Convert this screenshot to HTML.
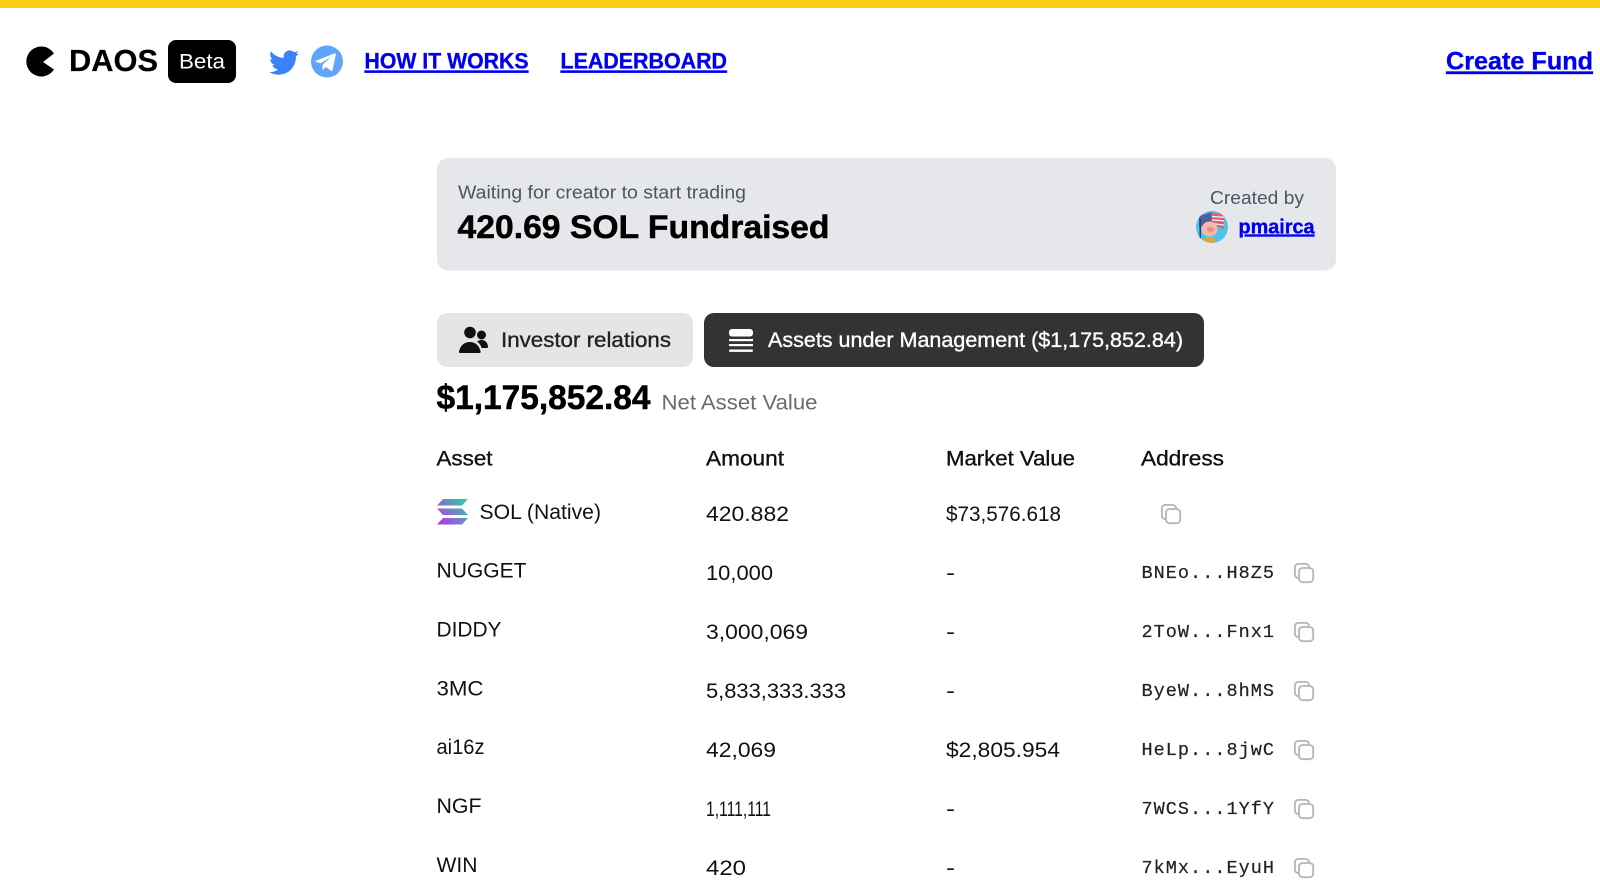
<!DOCTYPE html>
<html lang="en">
<head>
<meta charset="utf-8">
<title>DAOS</title>
<style>
html,body{margin:0;padding:0;background:#fff;width:1600px;height:891px;overflow:hidden}
svg{display:block;position:absolute;left:0;top:0}
text{font-family:"Liberation Sans",sans-serif;white-space:pre}
.m{stroke:currentColor;stroke-width:.35px}
.b{font-weight:700;stroke:currentColor;stroke-width:.5px}
.lnk{fill:#0000f0;font-weight:700;text-decoration:underline;stroke:#0000f0;stroke-width:.35px}
.t{font-size:21px;fill:#111}
.mono{font-family:"Liberation Mono",monospace;font-size:18.5px;fill:#222;stroke:#222;stroke-width:.2px}
</style>
</head>
<body>
<svg width="1600" height="891" viewBox="0 0 1600 891" xmlns="http://www.w3.org/2000/svg">
<defs>
<linearGradient id="sol" x1="437" y1="526" x2="468" y2="498" gradientUnits="userSpaceOnUse">
<stop offset="0" stop-color="#c026f0"/><stop offset=".5" stop-color="#7a80c8"/><stop offset="1" stop-color="#14e0a0"/>
</linearGradient>
<g id="copy" fill="none" stroke="#b5b5b5" stroke-width="1.8">
<rect x="0.9" y="0.9" width="14.2" height="14.2" rx="3.5"/>
<rect x="5" y="5" width="14.2" height="14.2" rx="3.5" fill="#fff"/>
</g>
</defs>

<rect x="0" y="0" width="1600" height="8" fill="#fdce14"/>

<!-- logo -->
<path d="M54 53.500A15 15 0 1 0 54 69.500L43 62Z" fill="#000"/>
<text x="69" y="71" font-size="31" textLength="89" lengthAdjust="spacingAndGlyphs" fill="#000" color="#000" class="b" style="stroke-width:.2px">DAOS</text>
<rect x="168" y="40" width="68" height="43" rx="8" fill="#000"/>
<text x="179" y="68.500" font-size="21" textLength="46" lengthAdjust="spacingAndGlyphs" fill="#fff">Beta</text>

<!-- twitter -->
<path transform="translate(269,47.500) scale(1.25)" d="M23.95 4.57a10 10 0 0 1-2.83.8 4.96 4.96 0 0 0 2.17-2.72c-.95.56-2 .96-3.130 1.190a4.920 4.920 0 0 0-8.380 4.480C7.690 8.100 4.070 6.130 1.640 3.160a4.820 4.820 0 0 0-.67 2.480c0 1.710.87 3.210 2.190 4.100a4.900 4.900 0 0 1-2.230-.62v.06a4.920 4.920 0 0 0 3.950 4.830 5 5 0 0 1-2.210.08 4.940 4.940 0 0 0 4.600 3.420A9.870 9.870 0 0 1 0 19.540a14 14 0 0 0 7.560 2.210c9.050 0 14-7.500 14-13.980 0-.21 0-.42-.02-.63a9.940 9.940 0 0 0 2.410-2.570z" fill="#3b82f6"/>
<!-- telegram -->
<circle cx="327" cy="61.500" r="16" fill="#60a5fa"/>
<path d="M315.500 61l19-7.600c.8-.3 1.500.2 1.300 1.300l-3.200 15.200c-.2 1-.9 1.300-1.700.8l-5-3.700-2.400 2.300c-.4.4-.8.6-1.200.5l.4-5.300 8.200-7.500-10.300 6.400-4.800-1.500c-1-.3-1-1 .0-1.400z" fill="#fff"/>

<!-- nav -->
<a href="#"><text x="364.500" y="68.500" font-size="22" textLength="164" lengthAdjust="spacingAndGlyphs" class="lnk">HOW IT WORKS</text></a>
<a href="#"><text x="560.500" y="68.500" font-size="22" textLength="166.500" lengthAdjust="spacingAndGlyphs" class="lnk">LEADERBOARD</text></a>
<a href="#"><text x="1446" y="69.500" font-size="25" textLength="147" lengthAdjust="spacingAndGlyphs" class="lnk">Create Fund</text></a>

<!-- card -->
<rect x="437" y="158" width="899" height="112.500" rx="11" fill="#e5e7eb"/>
<text x="458" y="198.500" font-size="18.500" textLength="288" lengthAdjust="spacingAndGlyphs" fill="#4b5563">Waiting for creator to start trading</text>
<text x="457.500" y="238" font-size="32.500" textLength="372" lengthAdjust="spacingAndGlyphs" fill="#000" color="#000" class="b">420.69 SOL Fundraised</text>
<text x="1210" y="204" font-size="18.500" textLength="94" lengthAdjust="spacingAndGlyphs" fill="#4b5563">Created by</text>
<clipPath id="av"><circle cx="1212" cy="227" r="16"/></clipPath>
<g clip-path="url(#av)">
<rect x="1196" y="211" width="32" height="32" fill="#4cc4ee"/>
<path d="M1199 216l13-4 1 12-14 3z" fill="#4a5f9c"/>
<path d="M1211 213l13 1 0 15-12-5z" fill="#d9606c"/>
<path d="M1212 216.500l12 .8M1212 220l12 .8M1212 223.500l12 1.600" stroke="#f5eeee" stroke-width="1.300"/>
<rect x="1199.500" y="219" width="1.500" height="21" fill="#33406b"/>
<ellipse cx="1209.500" cy="229" rx="8" ry="7.500" fill="#f4b8a6"/>
<ellipse cx="1210.500" cy="229.500" rx="3.500" ry="2.500" fill="#ef8a88"/>
<rect x="1204" y="237.500" width="11" height="7" rx="2" fill="#d2ab3a"/>
</g>
<a href="#"><text x="1238.500" y="233.500" font-size="20" textLength="76" lengthAdjust="spacingAndGlyphs" class="lnk">pmairca</text></a>

<!-- tabs -->
<rect x="437" y="313" width="256" height="54" rx="10" fill="#e5e5e5"/>
<g fill="#111">
<circle cx="470" cy="332.500" r="5.800"/>
<path d="M460 353c-.8 0-1.300-.6-1-1.500 1-5.500 5-9.500 10.800-9.500 5.800 0 9.800 4 10.800 9.500.2.900-.3 1.500-1 1.500z"/>
<circle cx="481.500" cy="335" r="4.500"/>
<path d="M477 341.500c1.500-1 3-1.500 4.800-1.500 3.500 0 5.800 2.700 6.200 6.500.1.900-.4 1.500-1.100 1.500h-5.400c-.6-2.800-2.200-5-4.500-6.500z"/>
</g>
<text x="501" y="347" font-size="21.500" textLength="170" lengthAdjust="spacingAndGlyphs" fill="#222" color="#222" class="m">Investor relations</text>

<rect x="704" y="313" width="500" height="54" rx="10" fill="#333"/>
<g fill="#fff">
<rect x="729" y="329" width="24" height="7.500" rx="3"/>
<rect x="729" y="339" width="24" height="2.200"/>
<rect x="729" y="344" width="24" height="2.200"/>
<rect x="729" y="349.500" width="24" height="2.400" rx="1"/>
</g>
<text x="768" y="347" font-size="21.500" textLength="415" lengthAdjust="spacingAndGlyphs" fill="#fff" color="#fff" class="m">Assets under Management ($1,175,852.84)</text>

<!-- NAV -->
<text x="436.500" y="409" font-size="34" textLength="214" lengthAdjust="spacingAndGlyphs" fill="#000" color="#000" class="b">$1,175,852.84</text>
<text x="661.500" y="409.500" font-size="21" textLength="156" lengthAdjust="spacingAndGlyphs" fill="#6b6b6b">Net Asset Value</text>

<!-- table header -->
<g color="#111">
<text x="436.500" y="465.500" textLength="56" lengthAdjust="spacingAndGlyphs" class="t m">Asset</text>
<text x="706" y="465.500" textLength="78" lengthAdjust="spacingAndGlyphs" class="t m">Amount</text>
<text x="946" y="465.500" textLength="129" lengthAdjust="spacingAndGlyphs" class="t m">Market Value</text>
<text x="1141" y="465.500" textLength="83" lengthAdjust="spacingAndGlyphs" class="t m">Address</text>
</g>

<!-- SOL row -->
<path d="M443 499h25l-6 6.500h-25zM437 508.500h25l6 6.500h-25zM443 518h25l-6 6.500h-25z" fill="url(#sol)"/>
<text x="479.500" y="519" textLength="121.500" lengthAdjust="spacingAndGlyphs" class="t">SOL (Native)</text>
<text x="706" y="521" textLength="83" lengthAdjust="spacingAndGlyphs" class="t">420.882</text>
<text x="946" y="521" textLength="115" lengthAdjust="spacingAndGlyphs" class="t">$73,576.618</text>
<use href="#copy" x="1161" y="504"/>

<!-- NUGGET -->
<text x="436.500" y="577.500" textLength="90" lengthAdjust="spacingAndGlyphs" class="t">NUGGET</text>
<text x="706" y="580" textLength="67" lengthAdjust="spacingAndGlyphs" class="t">10,000</text>
<text x="946" y="580" textLength="9" lengthAdjust="spacingAndGlyphs" class="t">-</text>
<text x="1141.500" y="578" textLength="132.500" lengthAdjust="spacing" class="mono">BNEo...H8Z5</text>
<use href="#copy" x="1294" y="563"/>

<!-- DIDDY -->
<text x="436.500" y="636.500" textLength="65" lengthAdjust="spacingAndGlyphs" class="t">DIDDY</text>
<text x="706" y="639" textLength="102" lengthAdjust="spacingAndGlyphs" class="t">3,000,069</text>
<text x="946" y="639" textLength="9" lengthAdjust="spacingAndGlyphs" class="t">-</text>
<text x="1141.500" y="637" textLength="132.500" lengthAdjust="spacing" class="mono">2ToW...Fnx1</text>
<use href="#copy" x="1294" y="622"/>

<!-- 3MC -->
<text x="436.500" y="695.300" textLength="47" lengthAdjust="spacingAndGlyphs" class="t">3MC</text>
<text x="706" y="698" textLength="140" lengthAdjust="spacingAndGlyphs" class="t">5,833,333.333</text>
<text x="946" y="698" textLength="9" lengthAdjust="spacingAndGlyphs" class="t">-</text>
<text x="1141.500" y="696" textLength="132.500" lengthAdjust="spacing" class="mono">ByeW...8hMS</text>
<use href="#copy" x="1294" y="681"/>

<!-- ai16z -->
<text x="436.500" y="754.200" textLength="48" lengthAdjust="spacingAndGlyphs" class="t">ai16z</text>
<text x="706" y="757" textLength="70" lengthAdjust="spacingAndGlyphs" class="t">42,069</text>
<text x="946" y="757" textLength="114" lengthAdjust="spacingAndGlyphs" class="t">$2,805.954</text>
<text x="1141.500" y="755" textLength="132.500" lengthAdjust="spacing" class="mono">HeLp...8jwC</text>
<use href="#copy" x="1294" y="740"/>

<!-- NGF -->
<text x="436.500" y="813" textLength="45" lengthAdjust="spacingAndGlyphs" class="t">NGF</text>
<text x="706" y="816" textLength="65" lengthAdjust="spacingAndGlyphs" class="t">1,111,111</text>
<text x="946" y="816" textLength="9" lengthAdjust="spacingAndGlyphs" class="t">-</text>
<text x="1141.500" y="814" textLength="132.500" lengthAdjust="spacing" class="mono">7WCS...1YfY</text>
<use href="#copy" x="1294" y="799"/>

<!-- WIN -->
<text x="436.500" y="872" textLength="41" lengthAdjust="spacingAndGlyphs" class="t">WIN</text>
<text x="706" y="875" textLength="40" lengthAdjust="spacingAndGlyphs" class="t">420</text>
<text x="946" y="875" textLength="9" lengthAdjust="spacingAndGlyphs" class="t">-</text>
<text x="1141.500" y="873" textLength="132.500" lengthAdjust="spacing" class="mono">7kMx...EyuH</text>
<use href="#copy" x="1294" y="858"/>
</svg>
</body>
</html>
